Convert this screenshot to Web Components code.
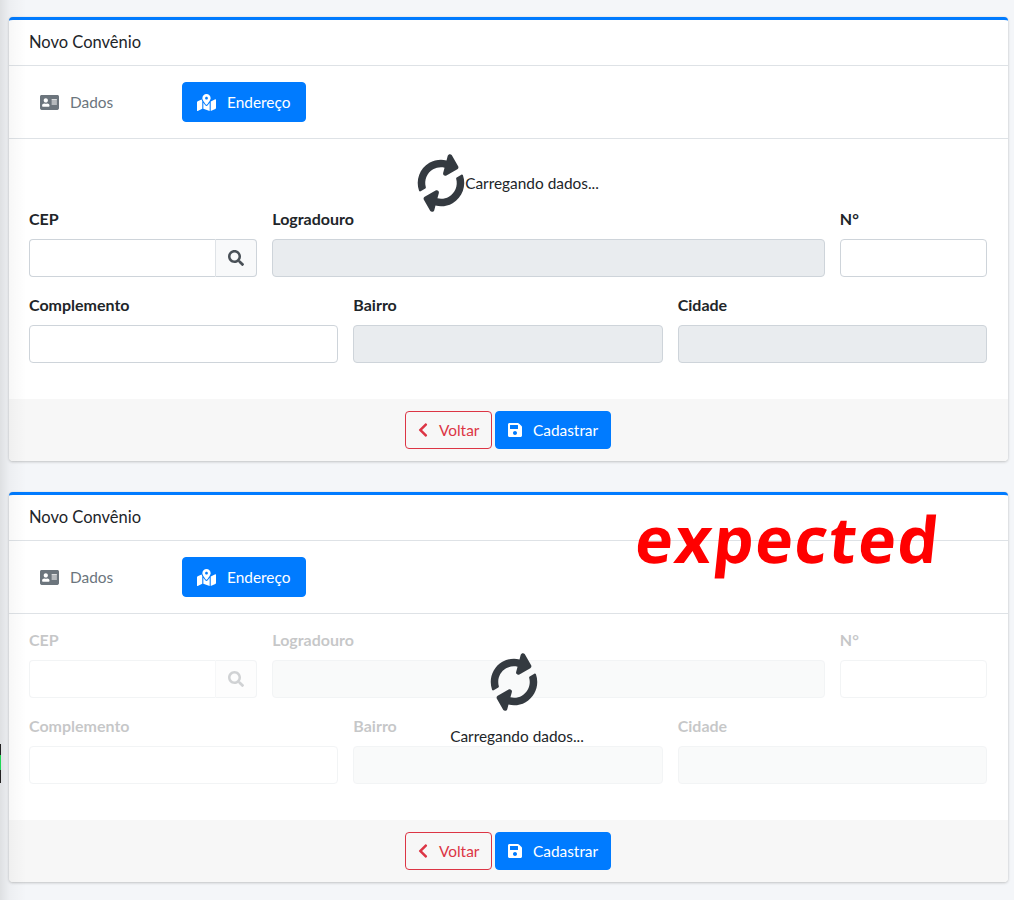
<!DOCTYPE html>
<html lang="pt-BR">
<head>
<meta charset="utf-8">
<title>Novo Convênio</title>
<style>
  html, body { margin: 0; height: 900px; overflow: hidden; }
  body {
    background: #f4f6f9;
    color: #212529;
    font-family: Lato, "Noto Sans", "Liberation Sans", sans-serif;
    font-size: 15.4px;
    line-height: 24px;
  }
</style>
</head>
<body>
<conv-page>
  <conv-card>
    <conv-form></conv-form>
  </conv-card>
  <conv-card overlay>
    <conv-form dimmed></conv-form>
  </conv-card>
</conv-page>

<script>
// Icones (formes Font Awesome 5 solid)
const ICONS = {
  search: ['0 0 512 512', 'M505 442.7L405.3 343c-4.5-4.5-10.6-7-17-7H372c27.6-35.3 44-79.7 44-128C416 93.1 322.9 0 208 0S0 93.1 0 208s93.1 208 208 208c48.3 0 92.7-16.4 128-44v16.3c0 6.4 2.5 12.5 7 17l99.7 99.7c9.4 9.4 24.6 9.4 33.9 0l28.3-28.3c9.4-9.4 9.4-24.6.1-34zM208 336c-70.7 0-128-57.2-128-128 0-70.7 57.2-128 128-128 70.7 0 128 57.2 128 128 0 70.7-57.2 128-128 128z'],
  sync: ['0 0 512 512', 'M370.72 133.28C339.458 104.008 298.888 87.962 255.848 88c-77.458.068-144.328 53.178-162.791 126.85-1.344 5.363-6.122 9.15-11.651 9.15H24.103c-7.498 0-13.194-6.807-11.807-14.176C33.933 94.924 134.813 8 256 8c66.448 0 126.791 26.136 171.315 68.685L463.03 40.97C478.149 25.851 504 36.559 504 57.941V192c0 13.255-10.745 24-24 24H345.941c-21.382 0-32.09-25.851-16.971-40.971l41.75-41.749zM32 296h134.059c21.382 0 32.09 25.851 16.971 40.971l-41.75 41.75c31.262 29.273 71.835 45.319 114.876 45.28 77.418-.07 144.315-53.144 162.787-126.849 1.344-5.363 6.122-9.15 11.651-9.15h57.304c7.498 0 13.194 6.807 11.807 14.176C478.067 417.076 377.187 504 256 504c-66.448 0-126.791-26.136-171.315-68.685L48.97 471.03C33.851 486.149 8 475.441 8 454.059V320c0-13.255 10.745-24 24-24z'],
  card: ['0 0 576 512', 'M528 32H48C21.5 32 0 53.5 0 80v352c0 26.5 21.5 48 48 48h480c26.5 0 48-21.5 48-48V80c0-26.5-21.5-48-48-48zm-352 96c35.3 0 64 28.7 64 64s-28.7 64-64 64-64-28.7-64-64 28.7-64 64-64zm112 236.8c0 10.6-10 19.2-22.4 19.2H86.4C74 384 64 375.4 64 364.8v-19.2c0-31.8 30.1-57.6 67.2-57.6h5c12.3 5.1 25.7 8 39.8 8s27.6-2.9 39.8-8h5c37.1 0 67.2 25.8 67.2 57.6v19.2zM512 312c0 4.4-3.6 8-8 8H360c-4.4 0-8-3.6-8-8v-16c0-4.4 3.6-8 8-8h144c4.4 0 8 3.6 8 8v16zm0-64c0 4.4-3.6 8-8 8H360c-4.4 0-8-3.6-8-8v-16c0-4.4 3.6-8 8-8h144c4.4 0 8 3.6 8 8v16zm0-64c0 4.4-3.6 8-8 8H360c-4.4 0-8-3.6-8-8v-16c0-4.4 3.6-8 8-8h144c4.4 0 8 3.6 8 8v16z'],
  map: ['0 0 576 512', 'M288 0c-69.59 0-126 56.41-126 126 0 56.26 82.35 158.8 113.9 196.02 6.39 7.54 17.82 7.54 24.2 0C331.65 284.8 414 182.26 414 126 414 56.41 357.59 0 288 0zm0 168c-23.2 0-42-18.8-42-42s18.8-42 42-42 42 18.8 42 42-18.8 42-42 42zM20.12 215.95A32.006 32.006 0 0 0 0 245.66v250.32c0 11.32 11.43 19.06 21.94 14.86L160 448V214.92c-8.84-15.98-16.07-31.54-21.25-46.42L20.12 215.95zM288 359.67c-14.07 0-27.38-6.18-36.51-16.96-19.66-23.2-40.57-49.62-59.49-76.72V448l192 64V266c-18.92 27.09-39.82 53.52-59.49 76.72-9.13 10.77-22.44 16.95-36.51 16.95zm266.06-198.51L416 224v288l139.88-55.95A31.996 31.996 0 0 0 576 426.34V176.02c0-11.32-11.43-19.06-21.94-14.86z'],
  save: ['0 0 448 512', 'M433.941 129.941l-83.882-83.882A48 48 0 0 0 316.118 32H48C21.49 32 0 53.49 0 80v352c0 26.51 21.49 48 48 48h352c26.51 0 48-21.49 48-48V163.882a48 48 0 0 0-14.059-33.941zM224 416c-35.346 0-64-28.654-64-64 0-35.346 28.654-64 64-64s64 28.654 64 64c0 35.346-28.654 64-64 64zm96-304.52V212c0 6.627-5.373 12-12 12H76c-6.627 0-12-5.373-12-12V108c0-6.627 5.373-12 12-12h228.52c3.183 0 6.235 1.264 8.485 3.515l3.48 3.48A11.996 11.996 0 0 1 320 111.48z'],
  chevron: ['0 0 320 512', 'M34.52 239.03L228.87 44.69c9.37-9.37 24.57-9.37 33.94 0l22.67 22.67c9.36 9.36 9.38 24.52.04 33.9L131.49 256l154.02 154.75c9.35 9.38 9.33 24.54-.04 33.9l-22.67 22.67c-9.37 9.37-24.57 9.37-33.94 0L34.52 272.97c-9.37-9.37-9.37-24.57 0-33.94z']
};

class ConvIcon extends HTMLElement {
  connectedCallback() {
    const [box, d] = ICONS[this.getAttribute('name')];
    const size = this.getAttribute('size') || 16;
    const shadow = this.attachShadow({ mode: 'open' });
    shadow.innerHTML = `
      <style>
        :host { display: inline-flex; flex: none; }
        svg { display: block; fill: currentColor; }
      </style>
      <svg viewBox="${box}" width="${size}" height="${size}"><path d="${d}"></path></svg>
    `;
  }
}
customElements.define('conv-icon', ConvIcon);

class ConvButton extends HTMLElement {
  constructor() {
    super();
    const shadow = this.attachShadow({ mode: 'open' });
    shadow.innerHTML = `
      <style>
        :host {
          display: inline-flex;
          align-items: center;
          box-sizing: border-box;
          height: var(--btn-height, 38px);
          padding: 0 0 0 var(--btn-pad, 12px);
          gap: var(--btn-gap, 10px);
          width: var(--btn-width, auto);
          border: 1px solid #007bff;
          border-radius: 4px;
          background: #007bff;
          color: #fff;
          white-space: nowrap;
        }
        :host([variant="outline"]) {
          background: transparent;
          border-color: #dc3545;
          color: #dc3545;
        }
        :host([variant="plain"]) {
          background: transparent;
          border-color: transparent;
          color: #6c757d;
        }
      </style>
      <slot name="icon"></slot>
      <slot></slot>
    `;
  }
}
customElements.define('conv-button', ConvButton);

class ConvField extends HTMLElement {
  connectedCallback() {
    const disabled = this.hasAttribute('disabled');
    const search = this.hasAttribute('search');
    const shadow = this.attachShadow({ mode: 'open' });
    shadow.innerHTML = `
      <style>
        :host { display: block; grid-column: span ${this.getAttribute('span') || 4}; min-width: 0; }
        label { display: block; font-weight: 700; font-size: 16px; line-height: 24px; margin-bottom: 8px; }
        .group { display: flex; height: 38px; }
        input {
          flex: 1; min-width: 0; box-sizing: border-box; height: 38px; margin: 0; padding: 6px 12px;
          border: 1px solid #ced4da; border-radius: 4px; background: #fff; outline: none;
        }
        input:disabled { background: #e9ecef; }
        .addon {
          flex: none; width: 42px; box-sizing: border-box; display: flex; align-items: center; justify-content: center;
          border: 1px solid #ced4da; border-left: 1px solid #dfe3e7; border-radius: 0 4px 4px 0; background: #f8f9fa; color: #495057;
        }
        .search input { border-radius: 4px 0 0 4px; border-right: 0; }
      </style>
      <label>${this.getAttribute('label')}</label>
      <div class="group ${search ? 'search' : ''}">
        <input type="text" ${disabled ? 'disabled' : ''}>
        ${search ? '<div class="addon"><conv-icon name="search" size="16"></conv-icon></div>' : ''}
      </div>
    `;
  }
}
customElements.define('conv-field', ConvField);

class ConvForm extends HTMLElement {
  constructor() {
    super();
    const shadow = this.attachShadow({ mode: 'open' });
    shadow.innerHTML = `
      <style>
        :host { display: grid; grid-template-columns: repeat(12, 1fr); column-gap: 15px; row-gap: 16px; padding-bottom: 16px; }
        :host([dimmed]) { opacity: .25; }
      </style>
      <conv-field span="3" label="CEP" search></conv-field>
      <conv-field span="7" label="Logradouro" disabled></conv-field>
      <conv-field span="2" label="N°"></conv-field>
      <conv-field span="4" label="Complemento"></conv-field>
      <conv-field span="4" label="Bairro" disabled></conv-field>
      <conv-field span="4" label="Cidade" disabled></conv-field>
    `;
  }
}
customElements.define('conv-form', ConvForm);

class ConvLoader extends HTMLElement {
  constructor() {
    super();
    const shadow = this.attachShadow({ mode: 'open' });
    shadow.innerHTML = `
      <style>
        :host { display: flex; justify-content: center; height: 48px; margin-top: 6px; }
        .spin { display: block; width: 48px; height: 48px; color: #343a40; }
        svg { display: block; fill: currentColor; transform: rotate(-30deg); overflow: visible; }
        .txt { margin-top: 12px; white-space: nowrap; }
        :host([overlay]) {
          position: absolute; left: 17px; right: 0; top: 44px; height: auto; margin: 0; z-index: 1;
          flex-direction: column; align-items: center;
        }
        :host([overlay]) .spin { margin-left: -6px; }
        :host([overlay]) .txt { margin: 18px 0 0; }
      </style>
      <div class="spin">
        <svg viewBox="0 0 512 512" width="48" height="48"><path d="${ICONS.sync[1]}"></path></svg>
      </div>
      <div class="txt">Carregando dados...</div>
    `;
  }
}
customElements.define('conv-loader', ConvLoader);

class ConvCard extends HTMLElement {
  constructor() {
    super();
    const overlay = this.hasAttribute('overlay');
    const shadow = this.attachShadow({ mode: 'open' });
    shadow.innerHTML = `
      <style>
        :host {
          display: block; position: relative; background: #fff;
          border-top: 3px solid #007bff; border-radius: 4px;
          box-shadow: 0 0 1px rgba(0,0,0,.125), 0 1px 3px rgba(0,0,0,.2);
        }
        .head { padding: 0 20px 2px; box-sizing: border-box; height: 46px; display: flex; align-items: center; border-bottom: 1px solid #dee2e6; font-size: 16.5px; }
        .tabs { height: 40px; padding: 16px; display: flex; border-bottom: 1px solid #dee2e6; }
        .tab-data { --btn-width: 157px; --btn-height: 40px; --btn-pad: 14px; --btn-gap: 11px; }
        .tab-addr { --btn-width: 124px; --btn-height: 40px; --btn-pad: 14px; --btn-gap: 11px; }
        .body { position: relative; padding: 14px 21px 20px 20px; }
        .foot { height: 62px; padding-right: 1px; background: #f7f7f7; border-radius: 0 0 4px 4px; display: flex; align-items: center; justify-content: center; gap: 3px; }
        .back { --btn-width: 87px; --btn-pad: 9px; --btn-gap: 8px; }
        .save { --btn-width: 116px; --btn-pad: 11px; --btn-gap: 10px; }
      </style>
      <div class="head">Novo Convênio</div>
      <div class="tabs">
        <conv-button variant="plain" class="tab-data"><conv-icon slot="icon" name="card" size="19"></conv-icon>Dados</conv-button>
        <conv-button class="tab-addr"><conv-icon slot="icon" name="map" size="19"></conv-icon>Endereço</conv-button>
      </div>
      <div class="body">
        <conv-loader ${overlay ? 'overlay' : ''}></conv-loader>
        <slot></slot>
      </div>
      <div class="foot">
        <conv-button variant="outline" class="back"><conv-icon slot="icon" name="chevron" size="16"></conv-icon>Voltar</conv-button>
        <conv-button class="save"><conv-icon slot="icon" name="save" size="16"></conv-icon>Cadastrar</conv-button>
      </div>
    `;
  }
}
customElements.define('conv-card', ConvCard);

class ConvPage extends HTMLElement {
  constructor() {
    super();
    const shadow = this.attachShadow({ mode: 'open' });
    shadow.innerHTML = `
      <style>
        :host { display: flex; flex-direction: column; gap: 31px; position: relative; box-sizing: border-box; height: 900px; padding: 17px 6px 0 9px; }
        .edge {
          position: absolute; left: 0; top: 0; bottom: 0; width: 26px; pointer-events: none;
          background: linear-gradient(90deg, rgba(0,0,0,.09), rgba(0,0,0,.03) 35%, rgba(0,0,0,0));
        }
        .strip {
          position: absolute; left: 0; top: 744px; width: 1px; height: 39px;
          background: linear-gradient(#222 0 11px, #1fd655 11px 26px, #222 26px);
        }
        .stamp {
          position: absolute; left: 634px; top: 495px; color: #f00;
          font: 700 64px/88px "Open Sans", sans-serif; letter-spacing: 1.5px; white-space: nowrap;
          transform: skewX(-6deg); transform-origin: 0 70%;
        }
      </style>
      <slot></slot>
      <div class="edge"></div>
      <div class="strip"></div>
      <div class="stamp">expected</div>
    `;
  }
}
customElements.define('conv-page', ConvPage);
</script>
</body>
</html>
